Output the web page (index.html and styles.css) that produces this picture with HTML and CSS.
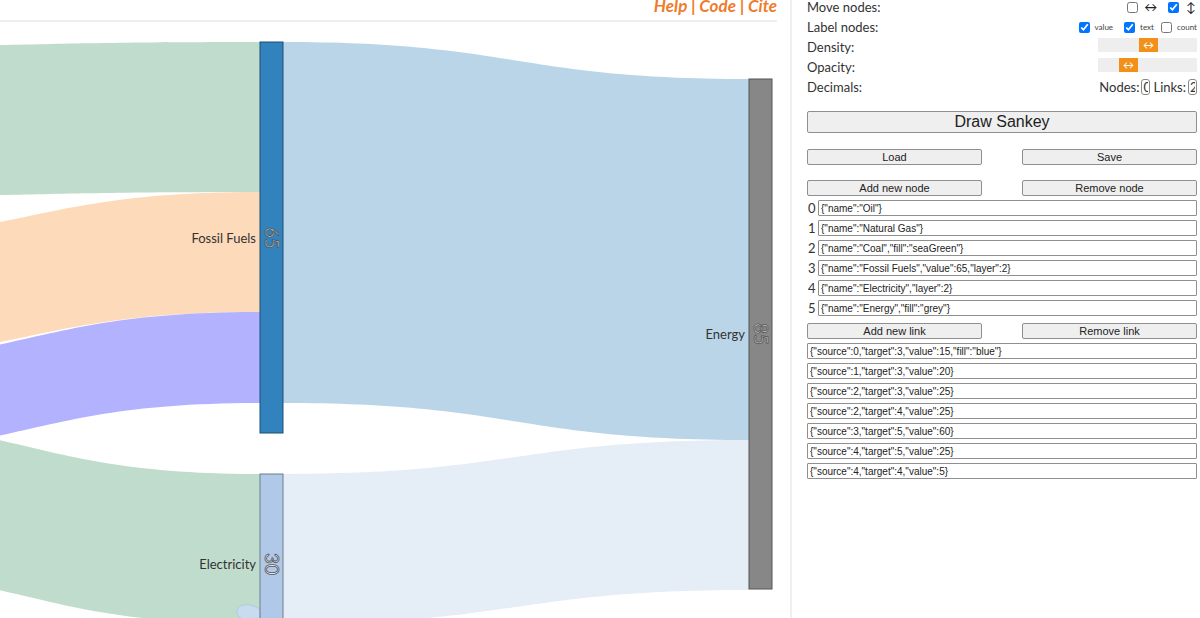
FILE: index.html
```html
<!DOCTYPE html>
<html lang="en">
<head>
    <meta charset="UTF-8">
    <meta name="viewport" content="width=device-width, initial-scale=1.0">
    <title>Sankey</title>
    <link rel="stylesheet" href="styles.css">
</head>
<body>
    <div class="page">
        <div class="chart">
            <div class="top-links">
                <a href="#">Help</a> | <a href="#">Code</a> | <a href="#">Cite</a>
            </div>
            <svg class="sankey" width="790" height="596" viewBox="0 22 790 596">
                <g class="links">
                    <!-- coal -> fossil fuels -->
                    <path d="M-206,47 C27,47 27,42 260,42 L260,192 C27,192 27,197 -206,197 Z" fill="#c0dccc"/>
                    <!-- natural gas -> fossil fuels -->
                    <path d="M-206,241 C27,241 27,192 260,192 L260,312 C27,312 27,361 -206,361 Z" fill="#fddab9"/>
                    <!-- oil -> fossil fuels -->
                    <path d="M-206,365 C27,365 27,312 260,312 L260,403 C27,403 27,456 -206,456 Z" fill="#b2b2ff"/>
                    <!-- coal -> electricity -->
                    <path d="M-206,419 C27,419 27,474 260,474 L260,624 C27,624 27,569 -206,569 Z" fill="#c0dccc"/>
                    <!-- fossil fuels -> energy -->
                    <path d="M283,42 C516,42 516,79 749,79 L749,440 C516,440 516,403 283,403 Z" fill="#bad5e8"/>
                    <!-- electricity -> energy -->
                    <path d="M283,474 C516,474 516,440 749,440 L749,590 C516,590 516,624 283,624 Z" fill="#e5edf7"/>
                    <!-- electricity -> electricity -->
                    <path d="M260,609 C250,603 238,603 237,611 C236,618 246,621 260,624 Z" fill="#c9dbee" stroke="#b3c9e3" stroke-width="1"/>
                </g>
                <g class="nodes">
                    <rect x="260" y="42" width="23" height="391" fill="#3182bd" stroke="#1d4f73"/>
                    <rect x="260" y="474" width="23" height="181" fill="#b1c9e8" stroke="#6d7c8e"/>
                    <rect x="749" y="79" width="23" height="510" fill="#878787" stroke="#555"/>

                    <text class="node-name" x="256" y="238">Fossil Fuels</text>
                    <text class="node-name" x="256" y="564">Electricity</text>
                    <text class="node-name" x="745" y="334">Energy</text>

                    <text class="node-value" x="272" y="238" transform="rotate(90 272 238)">65</text>
                    <text class="node-value" x="272" y="564" transform="rotate(90 272 564)">30</text>
                    <text class="node-value" x="761" y="334" transform="rotate(90 761 334)">85</text>
                </g>
            </svg>
        </div>

        <div class="panel">
            <div class="row">
                <span>Move nodes:</span>
                <span class="opts">
                    <input type="checkbox" class="check">
                    <span class="arrow">&#8596;</span>
                    <input type="checkbox" class="check gap-big" checked>
                    <span class="arrow arrow-v">&#8597;</span>
                </span>
            </div>
            <div class="row">
                <span>Label nodes:</span>
                <span class="opts">
                    <input type="checkbox" class="check" checked>
                    <span class="tiny">value</span>
                    <input type="checkbox" class="check gap-big" checked>
                    <span class="tiny">text</span>
                    <input type="checkbox" class="check gap-mid">
                    <span class="tiny">count</span>
                </span>
            </div>
            <div class="row">
                <span>Density:</span>
                <span class="slider"><span class="thumb" style="margin-left: 41px">&#8596;</span></span>
            </div>
            <div class="row">
                <span>Opacity:</span>
                <span class="slider"><span class="thumb" style="margin-left: 21px">&#8596;</span></span>
            </div>
            <div class="row">
                <span>Decimals:</span>
                <span class="opts">
                    <span>Nodes:</span>
                    <input type="text" class="num" value="0">
                    <span class="links-label">Links:</span>
                    <input type="text" class="num" value="2">
                </span>
            </div>

            <button class="draw">Draw Sankey</button>

            <div class="pair">
                <button class="btn">Load</button>
                <button class="btn">Save</button>
            </div>
            <div class="pair">
                <button class="btn">Add new node</button>
                <button class="btn">Remove node</button>
            </div>

            <div class="list">
                <div class="item"><span class="idx">0</span><input type="text" value='{"name":"Oil"}'></div>
                <div class="item"><span class="idx">1</span><input type="text" value='{"name":"Natural Gas"}'></div>
                <div class="item"><span class="idx">2</span><input type="text" value='{"name":"Coal","fill":"seaGreen"}'></div>
                <div class="item"><span class="idx">3</span><input type="text" value='{"name":"Fossil Fuels","value":65,"layer":2}'></div>
                <div class="item"><span class="idx">4</span><input type="text" value='{"name":"Electricity","layer":2}'></div>
                <div class="item"><span class="idx">5</span><input type="text" value='{"name":"Energy","fill":"grey"}'></div>
            </div>

            <div class="pair pair-links">
                <button class="btn">Add new link</button>
                <button class="btn">Remove link</button>
            </div>

            <div class="list">
                <div class="item"><input type="text" value='{"source":0,"target":3,"value":15,"fill":"blue"}'></div>
                <div class="item"><input type="text" value='{"source":1,"target":3,"value":20}'></div>
                <div class="item"><input type="text" value='{"source":2,"target":3,"value":25}'></div>
                <div class="item"><input type="text" value='{"source":2,"target":4,"value":25}'></div>
                <div class="item"><input type="text" value='{"source":3,"target":5,"value":60}'></div>
                <div class="item"><input type="text" value='{"source":4,"target":5,"value":25}'></div>
                <div class="item"><input type="text" value='{"source":4,"target":4,"value":5}'></div>
            </div>
        </div>
    </div>
</body>
</html>
```

FILE: styles.css
```css
body{
    margin: 0;
    background-color: white;
    color: #333;
    font-family: Lato, "Open Sans", sans-serif;
    overflow: hidden;
}

.page{
    display: flex;
    height: 618px;
}

.chart{
    width: 790px;
    flex-shrink: 0;
    border-right: 2px solid #f0f0f0;
    overflow: hidden;
}
.top-links{
    width: 777px;
    height: 24px;
    margin-top: -4px;
    border-bottom: 2px solid #eeeeee;
    text-align: right;
    font-size: 17px;
    line-height: 20px;
    font-weight: bold;
    font-style: italic;
    color: #ef7b2d;
}
.top-links a{
    color: #ef7b2d;
    text-decoration: none;
}
.sankey{
    display: block;
}
.node-name{
    font-family: Lato, sans-serif;
    font-size: 13px;
    fill: #333;
    text-anchor: end;
    dominant-baseline: central;
}
.node-value{
    font-family: Lato, sans-serif;
    font-size: 19px;
    fill: rgba(255, 255, 255, 0.6);
    stroke: #555;
    stroke-width: 0.8;
    text-anchor: middle;
    dominant-baseline: central;
}

.panel{
    width: 390px;
    margin-top: -3px;
    padding-left: 15px;
    font-size: 13px;
}
.row{
    height: 20px;
    display: flex;
    justify-content: space-between;
    align-items: center;
}
.opts{
    display: flex;
    align-items: center;
}
.check{
    width: 11px;
    height: 11px;
    margin: 0;
}
.arrow{
    font-size: 13px;
    margin-left: 6px;
    color: #222;
}
.arrow-v{
    margin-left: 7px;
    margin-right: 1px;
}
.gap-big{
    margin-left: 11px;
}
.gap-mid{
    margin-left: 7px;
}
.tiny{
    font-size: 8px;
    margin-left: 5px;
    color: #444;
}
.slider{
    width: 99px;
    height: 14px;
    margin-top: -4px;
    background-color: #eeeeee;
    display: flex;
}
.thumb{
    width: 19px;
    height: 14px;
    background-color: #f39019;
    color: white;
    font-size: 11px;
    line-height: 14px;
    text-align: center;
}
.num{
    width: 9px;
    height: 16px;
    box-sizing: border-box;
    margin: 0 0 0 2px;
    padding: 0 1px;
    border: 1px solid #888;
    border-radius: 3px;
    font-family: Lato, sans-serif;
    font-size: 13px;
    color: #333;
}
.links-label{
    margin-left: 3px;
}

.draw{
    display: block;
    width: 390px;
    height: 22px;
    margin-top: 14px;
    font-family: "Liberation Sans", Arial, sans-serif;
    font-size: 16px;
    color: #222;
    background-color: #efefef;
    border: 1px solid #8f8f8f;
    border-radius: 2px;
    padding: 0;
}
.pair{
    display: flex;
    justify-content: space-between;
    margin-top: 16px;
}
.pair + .pair{
    margin-top: 15px;
}
.pair-links{
    margin-top: 7px;
}
.btn{
    width: 175px;
    height: 16px;
    padding: 0;
    font-family: "Liberation Sans", Arial, sans-serif;
    font-size: 11px;
    color: #222;
    background-color: #efefef;
    border: 1px solid #8f8f8f;
    border-radius: 2px;
}
.list{
    margin-top: 4px;
}
.item{
    display: flex;
    align-items: center;
    height: 16px;
    margin-bottom: 4px;
}
.idx{
    width: 10px;
    font-size: 13px;
    line-height: 16px;
    padding-left: 1px;
}
.item input{
    flex: 1;
    height: 16px;
    box-sizing: border-box;
    margin: 0;
    padding: 0 2px;
    border: 1px solid #8f8f8f;
    border-radius: 1px;
    font-family: "Liberation Sans", Arial, sans-serif;
    font-size: 10px;
    color: #222;
}
```
